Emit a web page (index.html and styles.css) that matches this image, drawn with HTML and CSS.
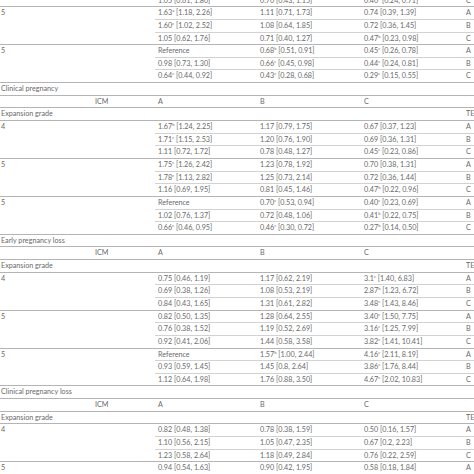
FILE: index.html
```html
<!DOCTYPE html>
<html>
<head>
<meta charset="utf-8">
<link rel="stylesheet" href="styles.css">
</head>
<body>
<div class="table">
  <div class="row end"><div class="lab"></div><div class="c">1.05 [0.61, 1.80]</div><div class="c">0.70 [0.43, 1.15]</div><div class="c">0.40<sup>c</sup> [0.24, 0.71]</div><div class="c">C</div></div>

  <div class="row"><div class="lab">5</div><div class="c">1.63<sup>a</sup> [1.18, 2.26]</div><div class="c">1.11 [0.71, 1.73]</div><div class="c">0.74 [0.39, 1.39]</div><div class="c">A</div></div>
  <div class="row"><div class="lab"></div><div class="c">1.60<sup>c</sup> [1.02, 2.52]</div><div class="c">1.08 [0.64, 1.85]</div><div class="c">0.72 [0.36, 1.45]</div><div class="c">B</div></div>
  <div class="row end"><div class="lab"></div><div class="c">1.05 [0.62, 1.76]</div><div class="c">0.71 [0.40, 1.27]</div><div class="c">0.47<sup>b</sup> [0.23, 0.98]</div><div class="c">C</div></div>

  <div class="row"><div class="lab">5</div><div class="c">Reference</div><div class="c">0.68<sup>b</sup> [0.51, 0.91]</div><div class="c">0.45<sup>c</sup> [0.26, 0.78]</div><div class="c">A</div></div>
  <div class="row"><div class="lab"></div><div class="c">0.98 [0.73, 1.30]</div><div class="c">0.66<sup>c</sup> [0.45, 0.98]</div><div class="c">0.44<sup>c</sup> [0.24, 0.81]</div><div class="c">B</div></div>
  <div class="row end"><div class="lab"></div><div class="c">0.64<sup>c</sup> [0.44, 0.92]</div><div class="c">0.43<sup>c</sup> [0.28, 0.68]</div><div class="c">0.29<sup>c</sup> [0.15, 0.55]</div><div class="c">C</div></div>

  <div class="row full"><div class="title">Clinical pregnancy</div></div>
  <div class="row end"><div class="lab icm">ICM</div><div class="c">A</div><div class="c">B</div><div class="c">C</div><div class="c"></div></div>
  <div class="row end"><div class="lab">Expansion grade</div><div class="c"></div><div class="c"></div><div class="c"></div><div class="c">TE</div></div>

  <div class="row"><div class="lab">4</div><div class="c">1.67<sup>b</sup> [1.24, 2.25]</div><div class="c">1.17 [0.79, 1.75]</div><div class="c">0.67 [0.37, 1.23]</div><div class="c">A</div></div>
  <div class="row"><div class="lab"></div><div class="c">1.71<sup>c</sup> [1.15, 2.53]</div><div class="c">1.20 [0.76, 1.90]</div><div class="c">0.69 [0.36, 1.31]</div><div class="c">B</div></div>
  <div class="row end"><div class="lab"></div><div class="c">1.11 [0.72, 1.72]</div><div class="c">0.78 [0.48, 1.27]</div><div class="c">0.45<sup>c</sup> [0.23, 0.86]</div><div class="c">C</div></div>

  <div class="row"><div class="lab">5</div><div class="c">1.75<sup>c</sup> [1.26, 2.42]</div><div class="c">1.23 [0.78, 1.92]</div><div class="c">0.70 [0.38, 1.31]</div><div class="c">A</div></div>
  <div class="row"><div class="lab"></div><div class="c">1.78<sup>c</sup> [1.13, 2.82]</div><div class="c">1.25 [0.73, 2.14]</div><div class="c">0.72 [0.36, 1.44]</div><div class="c">B</div></div>
  <div class="row end"><div class="lab"></div><div class="c">1.16 [0.69, 1.95]</div><div class="c">0.81 [0.45, 1.46]</div><div class="c">0.47<sup>b</sup> [0.22, 0.96]</div><div class="c">C</div></div>

  <div class="row"><div class="lab">5</div><div class="c">Reference</div><div class="c">0.70<sup>c</sup> [0.53, 0.94]</div><div class="c">0.40<sup>c</sup> [0.23, 0.69]</div><div class="c">A</div></div>
  <div class="row"><div class="lab"></div><div class="c">1.02 [0.76, 1.37]</div><div class="c">0.72 [0.48, 1.06]</div><div class="c">0.41<sup>b</sup> [0.22, 0.75]</div><div class="c">B</div></div>
  <div class="row end"><div class="lab"></div><div class="c">0.66<sup>c</sup> [0.46, 0.95]</div><div class="c">0.46<sup>c</sup> [0.30, 0.72]</div><div class="c">0.27<sup>b</sup> [0.14, 0.50]</div><div class="c">C</div></div>

  <div class="row full"><div class="title">Early pregnancy loss</div></div>
  <div class="row end"><div class="lab icm">ICM</div><div class="c">A</div><div class="c">B</div><div class="c">C</div><div class="c"></div></div>
  <div class="row end"><div class="lab">Expansion grade</div><div class="c"></div><div class="c"></div><div class="c"></div><div class="c">TE</div></div>

  <div class="row"><div class="lab">4</div><div class="c">0.75 [0.46, 1.19]</div><div class="c">1.17 [0.62, 2.19]</div><div class="c">3.1<sup>c</sup> [1.40, 6.83]</div><div class="c">A</div></div>
  <div class="row"><div class="lab"></div><div class="c">0.69 [0.38, 1.26]</div><div class="c">1.08 [0.53, 2.19]</div><div class="c">2.87<sup>b</sup> [1.23, 6.72]</div><div class="c">B</div></div>
  <div class="row end"><div class="lab"></div><div class="c">0.84 [0.43, 1.65]</div><div class="c">1.31 [0.61, 2.82]</div><div class="c">3.48<sup>c</sup> [1.43, 8.46]</div><div class="c">C</div></div>

  <div class="row"><div class="lab">5</div><div class="c">0.82 [0.50, 1.35]</div><div class="c">1.28 [0.64, 2.55]</div><div class="c">3.40<sup>c</sup> [1.50, 7.75]</div><div class="c">A</div></div>
  <div class="row"><div class="lab"></div><div class="c">0.76 [0.38, 1.52]</div><div class="c">1.19 [0.52, 2.69]</div><div class="c">3.16<sup>c</sup> [1.25, 7.99]</div><div class="c">B</div></div>
  <div class="row end"><div class="lab"></div><div class="c">0.92 [0.41, 2.06]</div><div class="c">1.44 [0.58, 3.58]</div><div class="c">3.82<sup>c</sup> [1.41, 10.41]</div><div class="c">C</div></div>

  <div class="row"><div class="lab">5</div><div class="c">Reference</div><div class="c">1.57<sup>b</sup> [1.00, 2.44]</div><div class="c">4.16<sup>c</sup> [2.11, 8.19]</div><div class="c">A</div></div>
  <div class="row"><div class="lab"></div><div class="c">0.93 [0.59, 1.45]</div><div class="c">1.45 [0.8, 2.64]</div><div class="c">3.86<sup>c</sup> [1.76, 8.44]</div><div class="c">B</div></div>
  <div class="row end"><div class="lab"></div><div class="c">1.12 [0.64, 1.98]</div><div class="c">1.76 [0.88, 3.50]</div><div class="c">4.67<sup>c</sup> [2.02, 10.83]</div><div class="c">C</div></div>

  <div class="row full"><div class="title">Clinical pregnancy loss</div></div>
  <div class="row end"><div class="lab icm">ICM</div><div class="c">A</div><div class="c">B</div><div class="c">C</div><div class="c"></div></div>
  <div class="row end"><div class="lab">Expansion grade</div><div class="c"></div><div class="c"></div><div class="c"></div><div class="c">TE</div></div>

  <div class="row"><div class="lab">4</div><div class="c">0.82 [0.48, 1.38]</div><div class="c">0.78 [0.38, 1.59]</div><div class="c">0.50 [0.16, 1.57]</div><div class="c">A</div></div>
  <div class="row"><div class="lab"></div><div class="c">1.10 [0.56, 2.15]</div><div class="c">1.05 [0.47, 2.35]</div><div class="c">0.67 [0.2, 2.23]</div><div class="c">B</div></div>
  <div class="row end"><div class="lab"></div><div class="c">1.23 [0.58, 2.64]</div><div class="c">1.18 [0.49, 2.84]</div><div class="c">0.76 [0.22, 2.59]</div><div class="c">C</div></div>

  <div class="row"><div class="lab">5</div><div class="c">0.94 [0.54, 1.63]</div><div class="c">0.90 [0.42, 1.95]</div><div class="c">0.58 [0.18, 1.84]</div><div class="c">A</div></div>
</div>
</body>
</html>
```
FILE: styles.css
```css
html, body {
  margin: 0;
  padding: 0;
  background: #ffffff;
  overflow: hidden;
  width: 474px;
  height: 474px;
}
.table {
  margin-top: -5.4px;
  font-family: "Lato", "Liberation Sans", sans-serif;
  font-size: 7.2px;
  color: #6a6a6a;
}
.row {
  display: grid;
  grid-template-columns: 155px 102px 104px 102px 20px;
  height: 12.65px;
}
.row > div {
  box-sizing: border-box;
  height: 12.65px;
  line-height: 11.65px;
  white-space: nowrap;
  overflow: visible;
}
.lab {
  padding-left: 1px;
  border-bottom: 1px solid transparent;
}
.icm {
  padding-left: 95px;
}
.c {
  padding-left: 3px;
  border-bottom: 1px solid #d2d2d2;
}
.row.end > div {
  border-bottom: 1px solid #b4b4b4;
}
.row.full {
  display: block;
}
.title {
  padding-left: 1px;
  border-bottom: 1px solid #b4b4b4;
}
sup {
  font-size: 4px;
  line-height: 0;
  vertical-align: 3px;
}
```
